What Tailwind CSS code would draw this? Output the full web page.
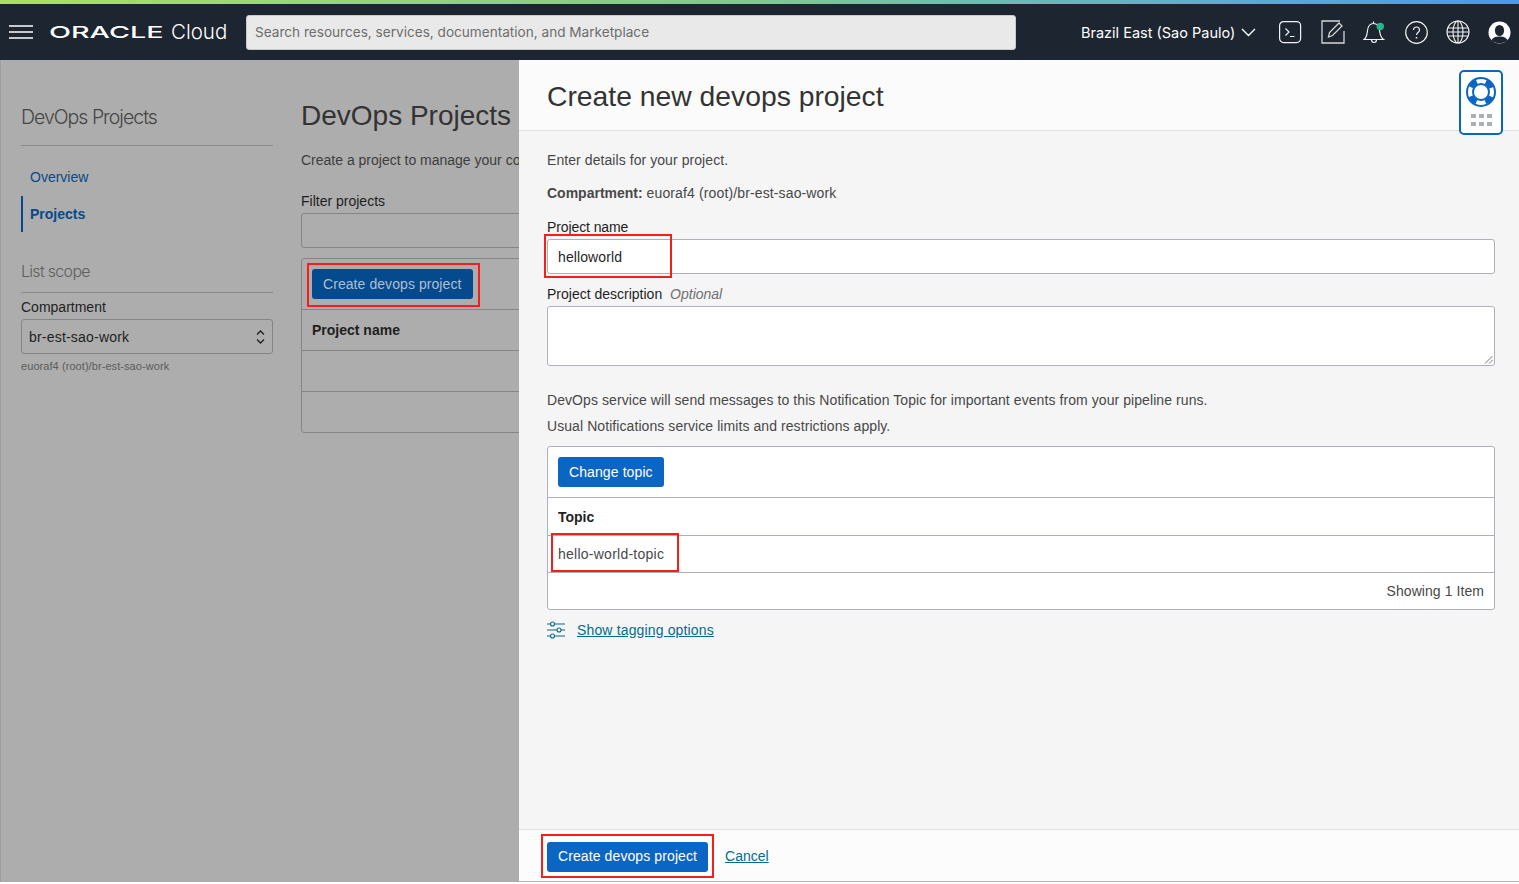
<!DOCTYPE html>
<html lang="en"><head><meta charset="utf-8"><title>Create new devops project</title>
<script src="https://cdn.jsdelivr.net/npm/@tailwindcss/browser@4"></script></head>
<body class="relative w-[1519px] h-[884px] overflow-hidden bg-white font-['Liberation_Sans',Arial,sans-serif] text-[14px] text-[#484848]">
<div class="h-[4px] bg-gradient-to-r from-[#a9e05c] via-[#80c890] to-[#4a98f0]"></div>
<header class="h-[56px] bg-[#1c2530] flex items-center text-white">
  <svg class="ml-[9px] w-[24px] h-[14px]" viewBox="0 0 24 14"><path d="M0 1h24M0 7h24M0 13h24" stroke="#fff" stroke-width="1.6"/></svg>
  <span class="ml-[16px] w-[116px] font-['Inter',sans-serif] font-medium text-[16.500px] leading-none inline-block origin-left [transform:scaleX(1.74)] whitespace-nowrap">ORACLE</span>
  <span class="ml-[6px] w-[58px] font-['Inter',sans-serif] font-light text-[20.500px] whitespace-nowrap">Cloud</span>
  <div class="ml-[17px] w-[770px] h-[35px] bg-[#e9e9e9] rounded-[3px] border border-[#c9c9c9] flex items-center pl-[8px] pt-[1px] text-[#6d6d6d] font-['Inter',sans-serif] text-[13.600px] whitespace-nowrap">Search resources, services, documentation, and Marketplace</div>
  <span class="ml-[65px] pt-[1px] font-['Inter',sans-serif] text-[14.500px] whitespace-nowrap w-[156px]">Brazil East (Sao Paulo)</span>
  <svg class="ml-[4px] w-[15px] h-[9px]" viewBox="0 0 15 9" fill="none"><path d="M1 1l6.500 6.500L14 1" stroke="#fff" stroke-width="1.400"/></svg>
  <svg class="ml-[22px] w-[24px] h-[24px]" viewBox="0 0 24 24" fill="none" stroke="#f2f2f2" stroke-width="1.200"><rect x="1.600" y="1.600" width="21" height="21" rx="4"/><path d="M7.500 8.500l3.500 3.500-3.500 3.500M12 16.500h4.500"/></svg>
  <svg class="ml-[19px] w-[24px] h-[24px]" viewBox="0 0 24 24" fill="none" stroke="#d6d6d6" stroke-width="1.300"><path d="M19 1H1v22h22V11"/><path d="M7.500 17l1-4.500L18 3l3 3-9.500 9.500z"/></svg>
  <svg class="ml-[18px] w-[23px] h-[24px]" viewBox="0 0 23 24" fill="none" stroke="#f2f2f2" stroke-width="1.200"><path d="M1 19.500c3-2 3-5 3.500-9C5 6 7.500 3.500 10.500 3.500S16 6 16.500 10.500c.5 4 1 7 4 9zM8.500 19.500c0 4 5 4 5 0M10.500 3.500V1.500"/><circle cx="17.300" cy="6.500" r="3.700" fill="#2bb58f" stroke="none"/></svg>
  <svg class="ml-[19px] w-[23px] h-[23px]" viewBox="0 0 23 23" fill="none" stroke="#f2f2f2" stroke-width="1.200"><circle cx="11.500" cy="11.500" r="10.800"/><path d="M8.500 9c0-4 6-4 6 0 0 2.500-3 2.500-3 5"/><path d="M11.500 16v1.500" stroke-width="1.500"/></svg>
  <svg class="ml-[18px] w-[24px] h-[24px]" viewBox="0 0 24 24" fill="none" stroke="#f2f2f2" stroke-width="1.100"><circle cx="12" cy="12" r="11"/><ellipse cx="12" cy="12" rx="5" ry="11"/><path d="M12 1v22M1.800 8h20.400M1.800 16h20.400M1 12h22"/></svg>
  <svg class="ml-[18px] w-[23px] h-[23px]" viewBox="0 0 23 23"><circle cx="11.500" cy="11.500" r="11" fill="#fff"/><ellipse cx="11.500" cy="9.500" rx="4.600" ry="5.600" fill="#1c2530"/><path d="M3.500 19.500c1.500-3.500 4.500-4 8-4s6.500.5 8 4c-4 3.500-12 3.500-16 0z" fill="#1c2530"/></svg>
</header>
<main class="flex h-[824px]">
  <div class="w-[519px] h-[822px] bg-[#adadad] border-l border-[#9f9f9f] flex overflow-hidden shrink-0">
    <aside class="w-[252px] ml-[20px] shrink-0">
      <h2 class="mt-[45px] text-[19.500px] leading-[24px] font-['Inter',sans-serif] font-light text-[#454545] tracking-[-1px] whitespace-nowrap">DevOps Projects</h2>
      <div class="mt-[16px] border-t border-[#8a8a8a]"></div>
      <a class="block mt-[23px] ml-[9px] text-[#054a8c] leading-[16px]">Overview</a>
      <div class="mt-[11px] h-[36px] border-l-2 border-[#054a8c] pl-[7px] flex items-center font-bold text-[#054a8c]">Projects</div>
      <h3 class="mt-[27px] text-[16px] leading-[24px] font-['Inter',sans-serif] font-light text-[#5e5e5e] tracking-[-0.700px]">List scope</h3>
      <div class="mt-[9px] border-t border-[#8a8a8a]"></div>
      <div class="mt-[6px] text-[#1f1f1f] leading-[17px]">Compartment</div>
      <div class="mt-[3px] h-[35px] border border-[#858585] rounded-[3px] flex items-center justify-between pl-[7px] pr-[7px] pt-[1px] text-[#1f1f1f] tracking-[0.200px]">br-est-sao-work
        <svg class="w-[9px] h-[16px]" viewBox="0 0 9 16" fill="none" stroke="#1f1f1f" stroke-width="1.300"><path d="M1 5.500l3.500-3.500L8 5.500M1 10.500l3.500 3.500L8 10.500"/></svg></div>
      <div class="mt-[6px] text-[11px] leading-[13px] text-[#5c5c5c] tracking-[0.070px]">euoraf4 (root)/br-est-sao-work</div>
    </aside>
    <section class="ml-[28px] w-[300px] shrink-0">
      <h1 class="mt-[40px] text-[28px] leading-[32px] text-[#333] whitespace-nowrap">DevOps Projects</h1>
      <p class="mt-[19px] leading-[18px] text-[#3d3d3d] whitespace-nowrap">Create a project to manage your code repositories</p>
      <div class="mt-[24px] leading-[17px] text-[#1f1f1f]">Filter projects</div>
      <div class="mt-[3px] h-[35px] border border-[#858585] rounded-[3px]"></div>
      <div class="mt-[10px] h-[175px] border border-[#858585] rounded-[3px]">
        <div class="h-[51px] border-b border-[#858585] pl-[10px] pt-[10px]"><span class="inline-flex items-center h-[30px] pl-[11px] pr-[12px] bg-[#054a8c] rounded-[3px] text-[#aebfd0] whitespace-nowrap tracking-[0.070px]">Create devops project</span></div>
        <div class="h-[41px] border-b border-[#858585] pl-[10px] flex items-center font-bold text-[#1f1f1f]">Project name</div>
        <div class="h-[41px] border-b border-[#858585]"></div>
      </div>
    </section>
  </div>
  <div class="flex-1 h-[822px] bg-[#f5f5f5] flex flex-col border-b border-[#b5b5b5]">
    <div class="h-[71px] shrink-0 bg-[#fbfbfb] border-b border-[#e0e0e0] pl-[28px] pt-[20px] text-[28.300px] leading-[33px] text-[#333]">Create new devops project</div>
    <div class="flex-1 pl-[28px] pr-[24px]">
      <p class="mt-[21px] leading-[17px] tracking-[0.070px]">Enter details for your project.</p>
      <p class="mt-[16px] leading-[17px]"><b>Compartment:</b> <span class="tracking-[0.130px]">euoraf4 (root)/br-est-sao-work</span></p>
      <div class="mt-[17px] leading-[16px] text-[#1f1f1f] tracking-[-0.100px]">Project name</div>
      <div class="mt-[4px] h-[35px] bg-white border border-[#adb1bb] rounded-[3px] flex items-center pl-[10px] pt-[1px] text-[#1f1f1f] tracking-[0.100px]">helloworld</div>
      <div class="mt-[12px] leading-[16px] text-[#1f1f1f]">Project description <i class="ml-[4px] text-[14px] text-[#6f6f6f]">Optional</i></div>
      <div class="mt-[4px] h-[60px] bg-white border border-[#adb1bb] rounded-[3px] relative">
        <svg class="absolute right-[1px] bottom-[1px] w-[9px] h-[9px]" viewBox="0 0 9 9" stroke="#777" fill="none"><path d="M8.500 1L1 8.500M8.500 5L5 8.500"/></svg>
      </div>
      <p class="mt-[26px] leading-[17px] tracking-[0.075px]">DevOps service will send messages to this Notification Topic for important events from your pipeline runs.</p>
      <p class="mt-[9px] leading-[17px] tracking-[0.075px]">Usual Notifications service limits and restrictions apply.</p>
      <div class="mt-[11px] h-[164px] bg-white border border-[#adb1bb] rounded-[3px]">
        <div class="h-[51px] border-b border-[#adb1bb] pl-[10px] pt-[10px]"><span class="inline-flex items-center h-[30px] px-[11px] bg-[#0b66c3] rounded-[3px] text-white tracking-[0.100px]">Change topic</span></div>
        <div class="h-[38px] border-b border-[#adb1bb] pl-[10px] pt-[1px] flex items-center font-bold text-[#1f1f1f]">Topic</div>
        <div class="h-[37px] border-b border-[#adb1bb] pl-[10px] flex items-center tracking-[0.250px]">hello-world-topic</div>
        <div class="h-[36px] pr-[10px] flex items-center justify-end tracking-[0.070px]">Showing 1 Item</div>
      </div>
      <div class="mt-[11px] flex items-center text-[#056c8c] leading-[17px]">
        <svg class="w-[18px] h-[18px]" viewBox="0 0 18 18" fill="none" stroke="#056c8c" stroke-width="1.100"><path d="M0 3h3.500M7.500 3H18M0 9h10M14 9h4M0 15h3.500M7.500 15H18"/><circle cx="5.500" cy="3" r="2"/><circle cx="12" cy="9" r="2"/><circle cx="5.500" cy="15" r="2"/></svg>
        <a class="ml-[12px] underline tracking-[0.150px]">Show tagging options</a>
      </div>
    </div>
    <div class="h-[52px] shrink-0 bg-[#fcfcfc] border-t border-[#e0e0e0] pl-[28px] pt-[2px] flex items-center">
      <span class="inline-flex items-center h-[30px] px-[11px] bg-[#0b66c3] rounded-[3px] text-white whitespace-nowrap tracking-[0.100px]">Create devops project</span>
      <a class="ml-[17px] underline text-[#056c8c]">Cancel</a>
    </div>
  </div>
</main>
<div class="absolute left-[1459px] top-[70px] w-[44px] h-[65px] bg-white border-2 border-[#0b66c3] rounded-[5px] flex flex-col items-center pt-[5px]">
  <svg class="w-[30px] h-[30px]" viewBox="0 0 30 30" fill="none" stroke="#0b66c3"><circle cx="15" cy="15" r="14" stroke-width="2"/><circle cx="15" cy="15" r="8" stroke-width="2"/><circle cx="15" cy="15" r="11" stroke-width="5" stroke-dasharray="8 9.280" stroke-dashoffset="-4.640"/></svg>
  <div class="mt-[7px] grid grid-cols-3 gap-x-[3px] gap-y-[4px]">
    <i class="block w-[5px] h-[4px] bg-[#a9b0b8]"></i><i class="block w-[5px] h-[4px] bg-[#a9b0b8]"></i><i class="block w-[5px] h-[4px] bg-[#a9b0b8]"></i><i class="block w-[5px] h-[4px] bg-[#a9b0b8]"></i><i class="block w-[5px] h-[4px] bg-[#a9b0b8]"></i><i class="block w-[5px] h-[4px] bg-[#a9b0b8]"></i>
  </div>
</div>
<div class="absolute left-[544px] top-[234px] w-[128px] h-[44px] border-2 border-[#f1201c]"></div>
<div class="absolute left-[307px] top-[263px] w-[173px] h-[44px] border-2 border-[#f1201c]"></div>
<div class="absolute left-[551px] top-[533px] w-[128px] h-[39px] border-2 border-[#f1201c]"></div>
<div class="absolute left-[541px] top-[834px] w-[173px] h-[44px] border-2 border-[#f1201c]"></div>
</body></html>
